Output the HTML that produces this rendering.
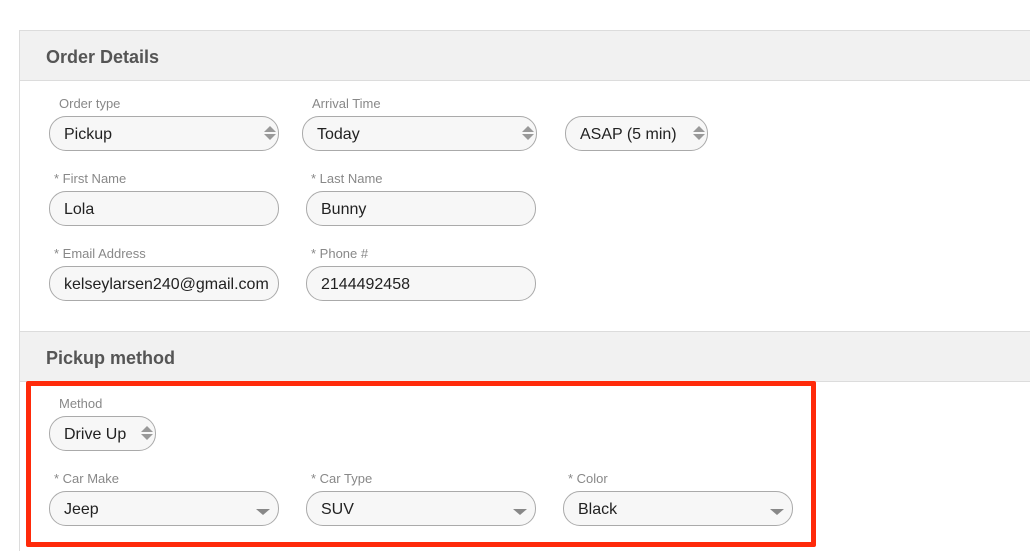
<!DOCTYPE html><html><head><style>
body{margin:0;width:1030px;height:551px;background:#fff;font-family:"Liberation Sans",Helvetica,sans-serif;position:relative;overflow:hidden}
.a{position:absolute}
.hdr{left:19px;width:1011px;height:49px;background:#f1f1f1;border-top:1px solid #dcdcdc;border-bottom:1px solid #dcdcdc;border-left:1px solid #dcdcdc}
.hdr span{position:absolute;left:26px;top:16px;font-size:18px;font-weight:bold;color:#555}
.lbl{font-size:13px;color:#888}
.in{height:33px;border:1px solid #aaa;border-radius:17px;background:#f7f7f7;font-size:16px;color:#222;line-height:36px;padding-left:14px;box-sizing:content-box;white-space:nowrap;overflow:hidden}
.ud{position:absolute;right:8px;top:9px;width:0;height:0}
.ud:before{content:"";position:absolute;left:-6px;top:0;border:6px solid transparent;border-top:0;border-bottom:6px solid #999}
.ud:after{content:"";position:absolute;left:-6px;top:8px;border:6px solid transparent;border-bottom:0;border-top:6px solid #999}
.dn{position:absolute;right:8px;top:17px;border:7px solid transparent;border-bottom:0;border-top:6px solid #888}
.em{width:208px;overflow:hidden;display:inline-block}
</style></head><body>
<div class="a" style="left:19px;top:30px;width:1px;height:521px;background:#dcdcdc"></div>
<div class="a hdr" style="top:30px"><span>Order Details</span></div>
<div class="a lbl" style="left:59px;top:96px">Order type</div>
<div class="a lbl" style="left:312px;top:96px">Arrival Time</div>
<div class="a in" style="left:49px;top:116px;width:214px">Pickup<i class="ud"></i></div>
<div class="a in" style="left:302px;top:116px;width:219px">Today<i class="ud"></i></div>
<div class="a in" style="left:565px;top:116px;width:127px">ASAP (5 min)<i class="ud"></i></div>
<div class="a lbl" style="left:54px;top:171px">* First Name</div>
<div class="a lbl" style="left:311px;top:171px">* Last Name</div>
<div class="a in" style="left:49px;top:191px;width:214px">Lola</div>
<div class="a in" style="left:306px;top:191px;width:214px">Bunny</div>
<div class="a lbl" style="left:54px;top:246px">* Email Address</div>
<div class="a lbl" style="left:311px;top:246px">* Phone #</div>
<div class="a in" style="left:49px;top:266px;width:214px"><span class="em">kelseylarsen240@gmail.com</span></div>
<div class="a in" style="left:306px;top:266px;width:214px">2144492458</div>
<div class="a hdr" style="top:331px"><span>Pickup method</span></div>
<div class="a lbl" style="left:59px;top:396px">Method</div>
<div class="a in" style="left:49px;top:416px;width:91px">Drive Up<i class="ud"></i></div>
<div class="a lbl" style="left:54px;top:471px">* Car Make</div>
<div class="a lbl" style="left:311px;top:471px">* Car Type</div>
<div class="a lbl" style="left:568px;top:471px">* Color</div>
<div class="a in" style="left:49px;top:491px;width:214px">Jeep<i class="dn"></i></div>
<div class="a in" style="left:306px;top:491px;width:214px">SUV<i class="dn"></i></div>
<div class="a in" style="left:563px;top:491px;width:214px">Black<i class="dn"></i></div>
<div class="a" style="left:26px;top:381px;width:780px;height:156px;border:5px solid #ff2a0a;border-radius:2px"></div>
</body></html>
